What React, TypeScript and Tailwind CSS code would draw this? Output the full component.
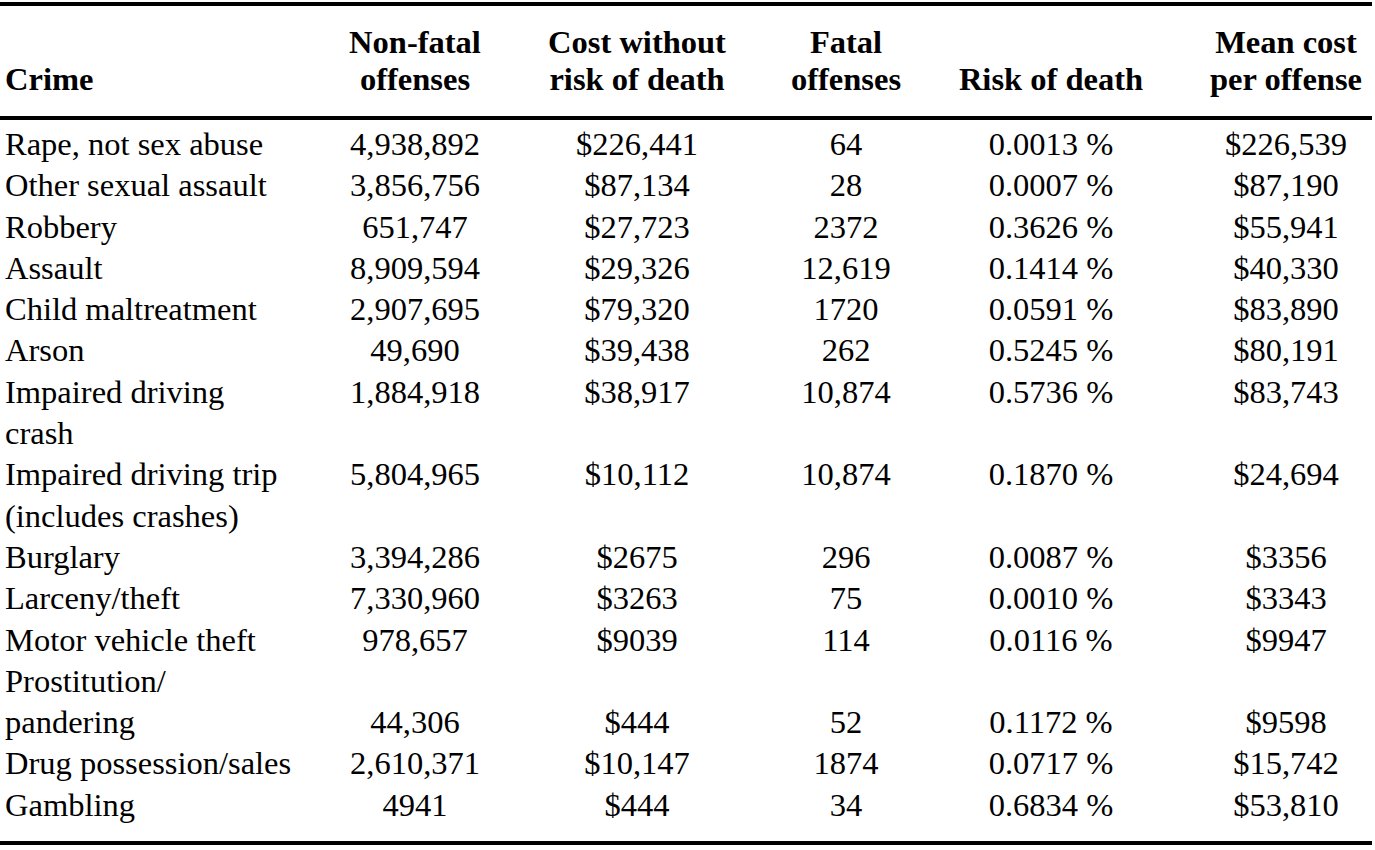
const rows: { crime: string[]; vals: string[]; bottom?: boolean }[] = [
  { crime: ["Rape, not sex abuse"], vals: ["4,938,892", "$226,441", "64", "0.0013 %", "$226,539"] },
  { crime: ["Other sexual assault"], vals: ["3,856,756", "$87,134", "28", "0.0007 %", "$87,190"] },
  { crime: ["Robbery"], vals: ["651,747", "$27,723", "2372", "0.3626 %", "$55,941"] },
  { crime: ["Assault"], vals: ["8,909,594", "$29,326", "12,619", "0.1414 %", "$40,330"] },
  { crime: ["Child maltreatment"], vals: ["2,907,695", "$79,320", "1720", "0.0591 %", "$83,890"] },
  { crime: ["Arson"], vals: ["49,690", "$39,438", "262", "0.5245 %", "$80,191"] },
  { crime: ["Impaired driving", "crash"], vals: ["1,884,918", "$38,917", "10,874", "0.5736 %", "$83,743"] },
  { crime: ["Impaired driving trip", "(includes crashes)"], vals: ["5,804,965", "$10,112", "10,874", "0.1870 %", "$24,694"] },
  { crime: ["Burglary"], vals: ["3,394,286", "$2675", "296", "0.0087 %", "$3356"] },
  { crime: ["Larceny/theft"], vals: ["7,330,960", "$3263", "75", "0.0010 %", "$3343"] },
  { crime: ["Motor vehicle theft"], vals: ["978,657", "$9039", "114", "0.0116 %", "$9947"] },
  { crime: ["Prostitution/", "pandering"], vals: ["44,306", "$444", "52", "0.1172 %", "$9598"], bottom: true },
  { crime: ["Drug possession/sales"], vals: ["2,610,371", "$10,147", "1874", "0.0717 %", "$15,742"] },
  { crime: ["Gambling"], vals: ["4941", "$444", "34", "0.6834 %", "$53,810"] },
];

const headers = [
  ["Non-fatal", "offenses"],
  ["Cost without", "risk of death"],
  ["Fatal", "offenses"],
  ["Risk of death"],
  ["Mean cost", "per offense"],
];

const cols = "grid grid-cols-[310px_210px_234px_184px_226px_208px]";

export default function App() {
  return (
    <div className="w-[1375px] h-[850px] bg-white text-black [font-family:'Liberation_Serif',serif]">
      <div className="w-[1372px] pt-[2px]">
        <div className="border-t-4 border-b-4 border-black">
          <div className={`${cols} pt-[18px] pb-[18px] text-[32.5px] leading-[37px] font-bold items-end`}>
            <div className="pl-[5px]">Crime</div>
            {headers.map((h, i) => (
              <div key={i} className={`text-center ${i === 4 ? "pl-9" : ""}`}>
                {h.map((l) => <div key={l}>{l}</div>)}
              </div>
            ))}
          </div>
        </div>
        <div className="pt-[4px] pb-[15px] border-b-4 border-black text-[32.5px] leading-[41.3px]">
          {rows.map((r) => (
            <div key={r.crime.join()} className={cols}>
              <div className="pl-[5px]">{r.crime.map((l) => <div key={l}>{l}</div>)}</div>
              {r.vals.map((v, i) => (
                <div key={i} className={`text-center flex flex-col ${r.bottom ? "justify-end" : ""} ${i === 4 ? "pl-9" : ""}`}>
                  {v}
                </div>
              ))}
            </div>
          ))}
        </div>
      </div>
    </div>
  );
}
